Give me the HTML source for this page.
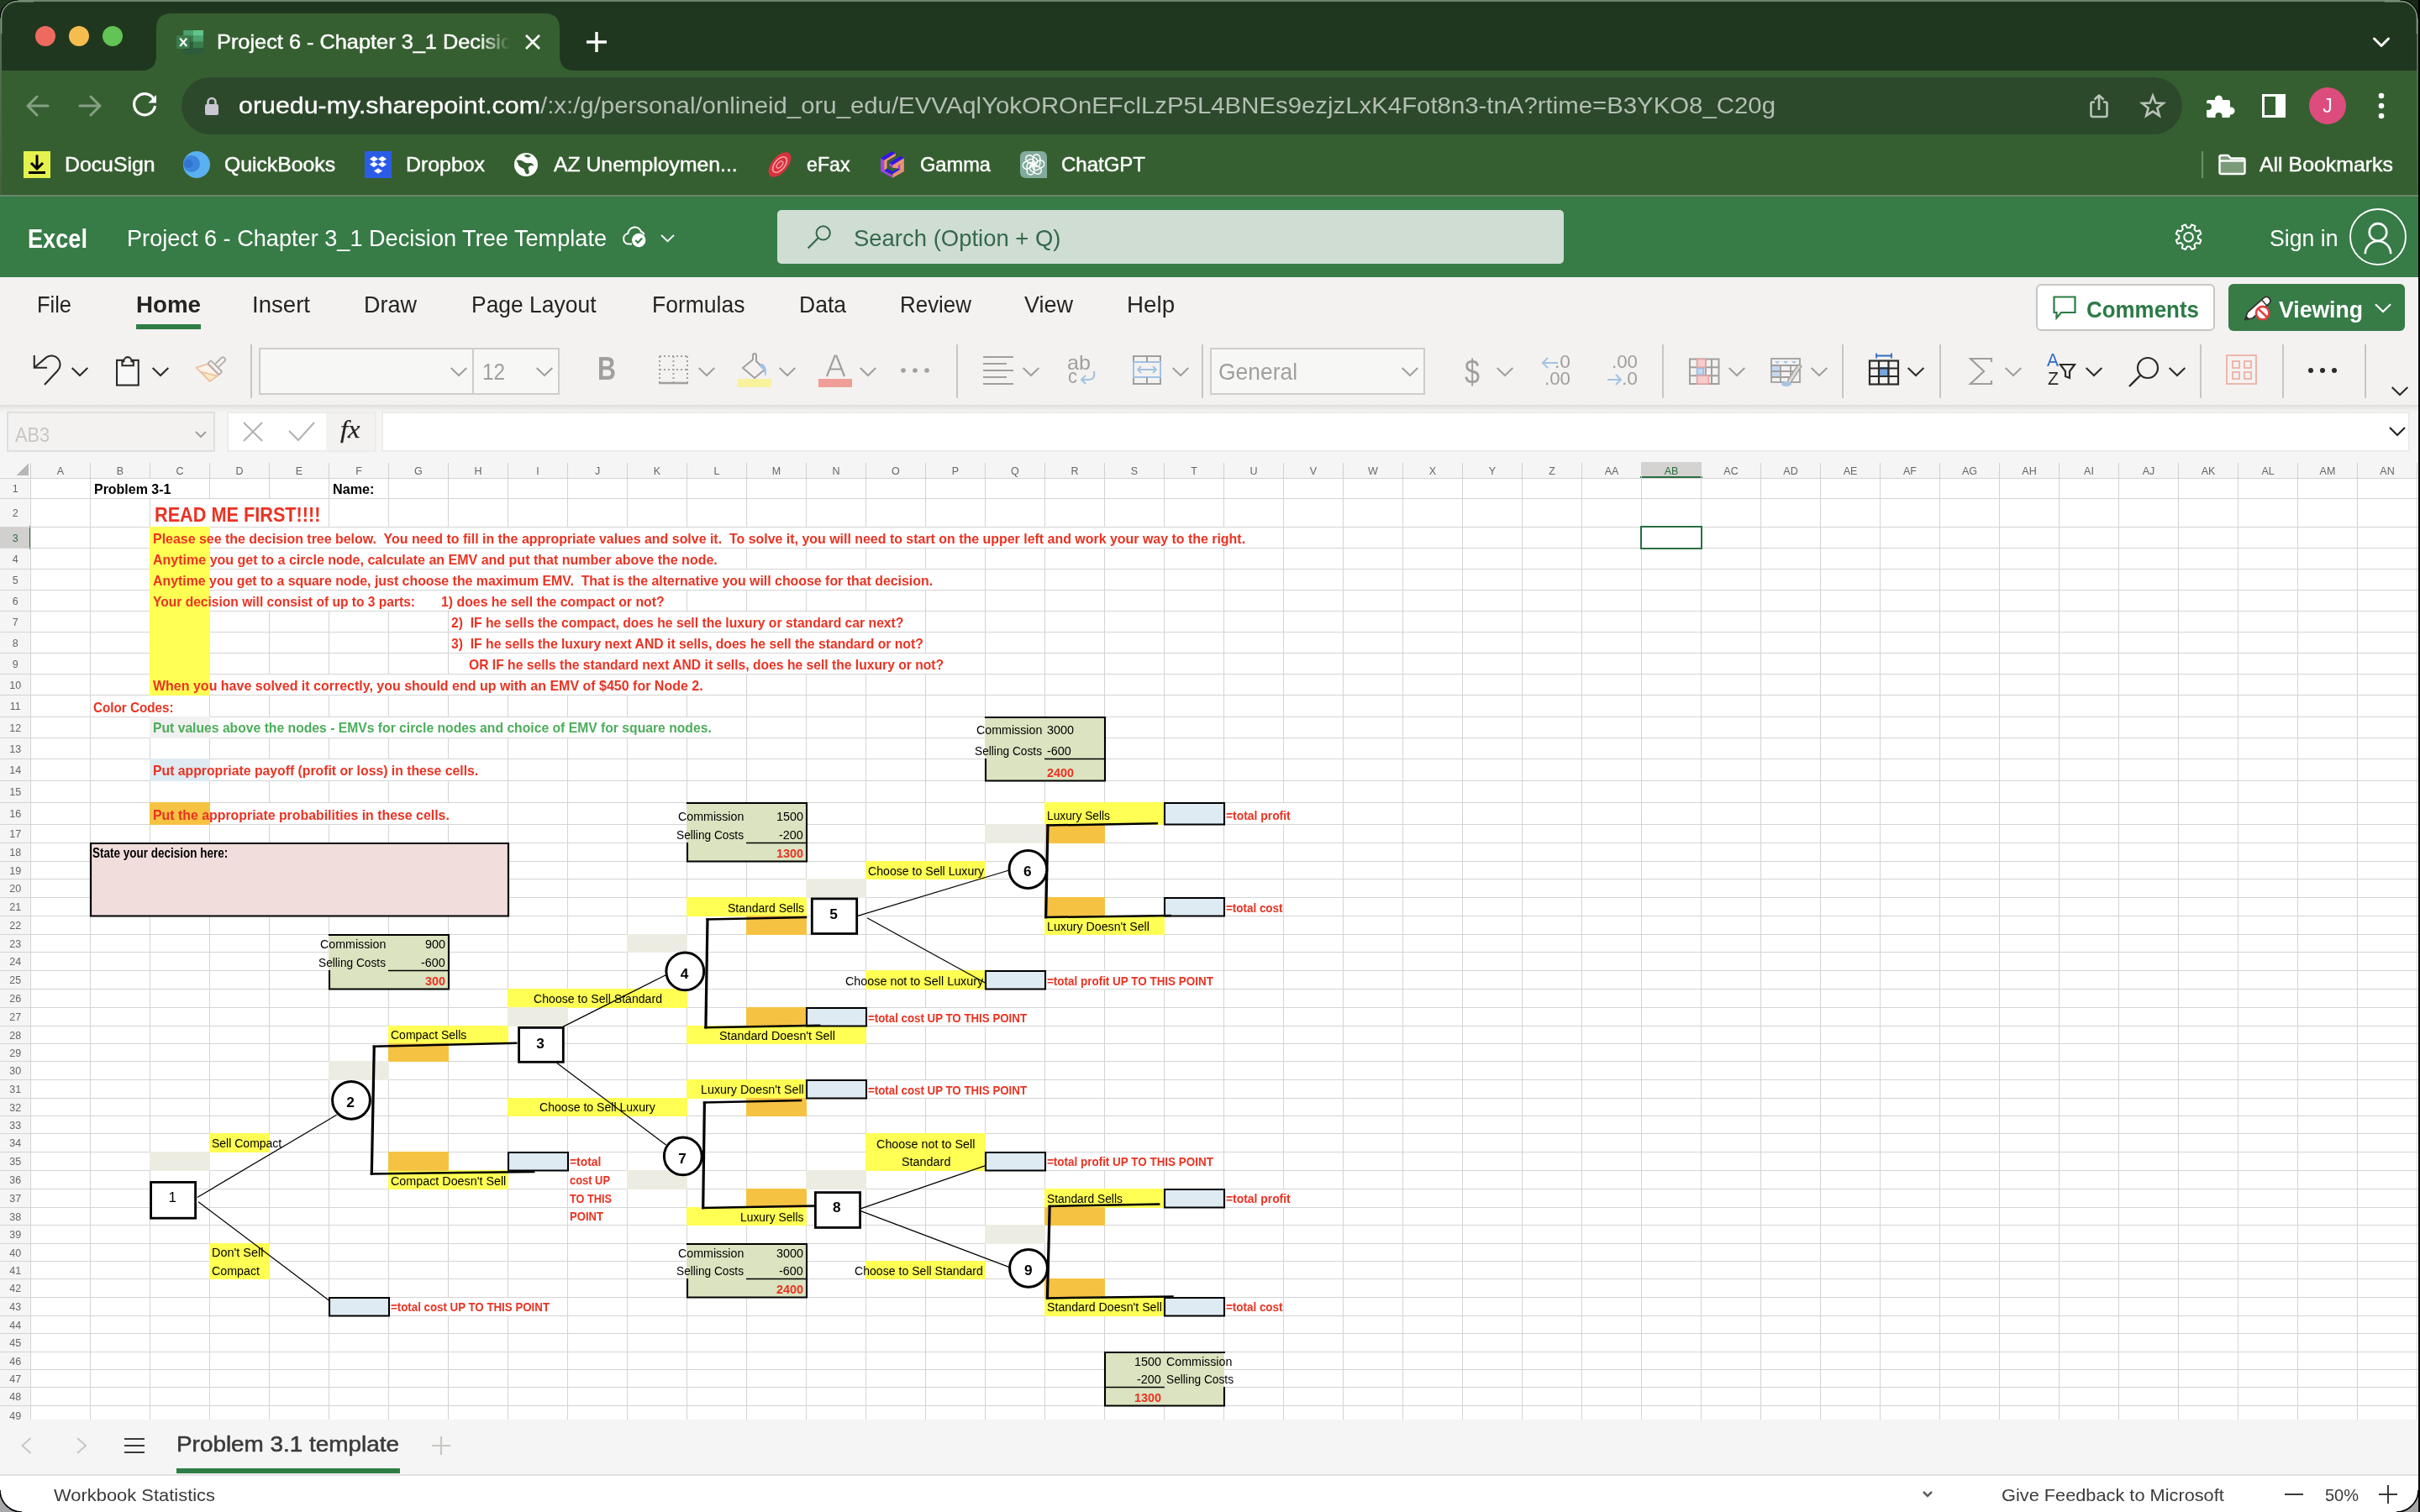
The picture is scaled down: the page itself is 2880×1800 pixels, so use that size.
<!DOCTYPE html>
<html><head><meta charset="utf-8"><title>Project 6 - Chapter 3_1 Decision Tree Template</title>
<style>
html,body{margin:0;padding:0;background:#000;}
body{width:2880px;height:1800px;overflow:hidden;font-family:"Liberation Sans",sans-serif;}
#win{position:absolute;left:0;top:0;width:2878px;height:1800px;overflow:hidden;background:#fff;will-change:transform;}
.t{position:absolute;white-space:pre;transform-origin:0 50%;}
.r{position:absolute;}
.a{position:absolute;left:0;top:0;}
</style></head>
<body>
<div id="win">
<div class="r" style="left:0px;top:0px;width:2880px;height:84px;background:#20371f;"></div>
<div class="r" style="left:0px;top:84px;width:2880px;height:150px;background:#365f31;"></div>
<div class="r" style="left:0px;top:232px;width:2880px;height:2px;background:#68886a;"></div>
<svg class="a" width="2880" height="240" viewBox="0 0 2880 240"><path d="M168 84 Q186 84 186 66 L186 34 Q186 16 204 16 L648 16 Q666 16 666 34 L666 66 Q666 84 684 84 Z" fill="#365f31"/><circle cx="54" cy="43" r="12" fill="#ee6a5f"/><circle cx="94" cy="43" r="12" fill="#f5bd4f"/><circle cx="134" cy="43" r="12" fill="#61c454"/><g transform="translate(210,36)"><rect x="8.2" y="0" width="23.8" height="27.8" rx="1.6" fill="#2d5c3c"/><rect x="8.2" y="0" width="11.7" height="6.8" fill="#4ba06e"/><rect x="19.9" y="0" width="12.1" height="6.8" fill="#61c48a"/><rect x="8.2" y="6.8" width="11.7" height="7" fill="#3b8050"/><rect x="19.9" y="6.8" width="12.1" height="7" fill="#4da36e"/><rect x="8.2" y="13.8" width="11.7" height="7.2" fill="#2f5f3d"/><rect x="19.9" y="13.8" width="12.1" height="7.2" fill="#397d4c"/><rect x="8.6" y="7.2" width="8.4" height="15.6" fill="#1f3f27" opacity="0.55"/><rect x="0" y="6.3" width="16" height="15.6" rx="1" fill="#3a7d4c"/><path d="M4.2 9.6 L12.2 19 M12.2 9.6 L4.2 19" stroke="#fff" stroke-width="2.2"/></g><path d="M626 42 L642 58 M642 42 L626 58" stroke="#fff" stroke-width="2.6" fill="none"/><path d="M698 50 L722 50 M710 38 L710 62" stroke="#fff" stroke-width="3.4" fill="none"/><path d="M2825.5 46 L2834 54.5 L2842.5 46" stroke="#fff" stroke-width="3" fill="none" stroke-linecap="round" stroke-linejoin="round"/><path d="M57 126 L33 126 M44 115 L33 126 L44 137" stroke="#86a084" stroke-width="3" fill="none" stroke-linecap="round" stroke-linejoin="round"/><path d="M95 126 L119 126 M108 115 L119 126 L108 137" stroke="#86a084" stroke-width="3" fill="none" stroke-linecap="round" stroke-linejoin="round"/><path d="M183.5 119 A12.5 12.5 0 1 0 184.5 126" stroke="#fff" stroke-width="3.2" fill="none"/><path d="M186 113 L186 122.5 L176.5 122.5 Z" fill="#fff"/><rect x="216" y="92" width="2381" height="68" rx="34" fill="#2d492c"/><rect x="244" y="124" width="16" height="13" rx="2" fill="#c9c7d1"/><path d="M247.5 125 L247.5 121.5 A4.5 4.5 0 0 1 256.5 121.5 L256.5 125" stroke="#c9c7d1" stroke-width="2.6" fill="none"/><path d="M2493 121.500 L2490.500 121.500 Q2488.500 121.500 2488.500 123.500 L2488.500 137 Q2488.500 139 2490.500 139 L2505.500 139 Q2507.500 139 2507.500 137 L2507.500 123.500 Q2507.500 121.500 2505.500 121.500 L2503 121.500" stroke="#b9c3b8" stroke-width="2.6" fill="none"/><path d="M2498 131 L2498 114 M2492.500 118.500 L2498 113.500 L2503.500 118.500" stroke="#b9c3b8" stroke-width="2.6" fill="none" stroke-linejoin="round"/><polygon points="2562.0,113.8 2565.3,122.5 2574.6,122.9 2567.3,128.7 2569.8,137.7 2562.0,132.6 2554.2,137.7 2556.7,128.7 2549.4,122.9 2558.7,122.5" stroke="#b9c3b8" stroke-width="2.6" fill="none" stroke-linejoin="miter"/><path d="M2628 119 h8 a4.6 4.6 0 1 1 9 0 h7 q2 0 2 2 v6.5 a4.6 4.6 0 1 1 0 9 v1.5 q0 2 -2 2 h-7.5 v-2 a4 4 0 1 0 -8 0 v2 h-8.500 q-2 0 -2 -2 v-7 h2 a4 4 0 1 0 0 -8 h-2 v-2 q0 -2 2 -2 z" fill="#fff"/><rect x="2693.500" y="113.500" width="25" height="25" fill="none" stroke="#fff" stroke-width="3"/><rect x="2708" y="113" width="12" height="26" fill="#fff"/><circle cx="2770" cy="126" r="22" fill="#dc4c7c"/><circle cx="2834" cy="114" r="3.3" fill="#fff"/><circle cx="2834" cy="126" r="3.3" fill="#fff"/><circle cx="2834" cy="138" r="3.3" fill="#fff"/><rect x="28" y="180" width="32" height="32" fill="#e5f24d"/><path d="M44 184.500 L44 200 M37 194 L44 201 L51 194" stroke="#000" stroke-width="3" fill="none"/><rect x="34" y="204" width="20" height="3" fill="#000"/><circle cx="234" cy="196" r="16" fill="#5ab0f0"/><circle cx="228" cy="195" r="10" fill="#3b86dc"/><circle cx="224.500" cy="195" r="5" fill="#2f74cf"/><rect x="434" y="180" width="32" height="32" fill="#2b5ce8"/><g fill="#fff"><path d="M445 186 l5 3.200 -5 3.200 -5 -3.200z"/><path d="M455 186 l5 3.200 -5 3.200 -5 -3.200z"/><path d="M445 192.600 l5 3.200 -5 3.200 -5 -3.200z"/><path d="M455 192.600 l5 3.200 -5 3.200 -5 -3.200z"/><path d="M450 200.300 l5 3.200 -5 3.200 -5 -3.200z"/></g><circle cx="626" cy="196" r="14" fill="#fff"/><path d="M614.5 191 q5 -1.500 8.500 1.500 q3 2.500 7 1.500 q4 -0.500 5.500 3.500 q-3 -1 -5.500 0.500 q-2.500 2 -0.500 5 q1 3 -1.500 4.500 q-3 -0.500 -3.500 -4 q-0.500 -3 -4 -4 q-3.500 -1.500 -4 -5 z M624 184.500 q4.500 -1.500 8 1 q-2 2.500 -5 1.800 q-2.500 -0.300 -3 -2.800z" fill="#365f31"/><g transform="rotate(-50 928 196)"><ellipse cx="928" cy="196" rx="17.500" ry="9.500" fill="#d8323c"/><ellipse cx="928" cy="196" rx="11" ry="6" fill="none" stroke="#f2a0a6" stroke-width="1.600"/><ellipse cx="928" cy="196" rx="5" ry="2.600" fill="none" stroke="#f2a0a6" stroke-width="1.400"/></g><g transform="translate(1030 170) scale(0.09918)"><polygon points="183,185 225,210 225,335 325,392 325,422 183,340" fill="#a443f2"/><polygon points="325,392 462,312 462,342 325,422" fill="#ef9478"/><polygon points="183,185 320,100 360,125 225,210" fill="#3217ea"/><polygon points="225,210 360,125 360,158 258,218 258,308 225,335" fill="#ef9478"/><polygon points="225,335 258,308 325,348 392,308 415,320 325,375" fill="#3217ea"/><polygon points="325,375 415,320 415,262 462,235 462,312 325,392" fill="#ef9478"/><polygon points="285,243 420,160 462,185 325,268" fill="#3217ea"/><polygon points="285,243 325,268 325,300 285,275" fill="#a443f2"/><polygon points="325,268 462,185 462,235 415,262 392,275 392,308 325,300" fill="#ef9478"/><polygon points="392,275 415,262 415,320 392,308" fill="#a443f2"/></g><path d="M1221 180 h18 q7 0 7 7 v25 h-25 q-7 0 -7 -7 v-18 q0 -7 7 -7z" fill="#82ab9c"/><g fill="none" stroke="#fff" stroke-width="1.500" transform="translate(1230 196)"><rect x="-0.800" y="-12" width="8.600" height="14.600" rx="4.300" transform="rotate(0)"/><rect x="-0.800" y="-12" width="8.600" height="14.600" rx="4.300" transform="rotate(60)"/><rect x="-0.800" y="-12" width="8.600" height="14.600" rx="4.300" transform="rotate(120)"/><rect x="-0.800" y="-12" width="8.600" height="14.600" rx="4.300" transform="rotate(180)"/><rect x="-0.800" y="-12" width="8.600" height="14.600" rx="4.300" transform="rotate(240)"/><rect x="-0.800" y="-12" width="8.600" height="14.600" rx="4.300" transform="rotate(300)"/></g><rect x="2620" y="180" width="2" height="32" fill="#6f8f6d"/><path d="M2641.500 187 q0 -2 2 -2 h8 l3.500 3.500 h14.500 q2 0 2 2 v14.500 q0 2 -2 2 h-26 q-2 0 -2 -2 z" fill="#7b9a79" stroke="#fff" stroke-width="2.400"/><path d="M2641.500 191.500 h30" stroke="#fff" stroke-width="2.400"/></svg>
<div class="t" style="left:258.0px;top:37.7px;font-size:24px;line-height:24px;color:#fff;transform:scaleX(1.0555);-webkit-text-stroke:0.45px #fff;">Project 6 - Chapter 3_1 Decisio</div>
<div class="r" style="left:570px;top:30px;width:44px;height:40px;background:linear-gradient(90deg,rgba(54,95,49,0),#365f31 85%)"></div>
<div class="t" style="left:284.0px;top:112.3px;font-size:28px;line-height:28px;color:#fff;transform:scaleX(1.0847);-webkit-text-stroke:0.3px #fff;">oruedu-my.sharepoint.com</div>
<div class="t" style="left:643.0px;top:112.3px;font-size:28px;line-height:28px;color:#b4bfb3;transform:scaleX(1.0488);">/:x:/g/personal/onlineid_oru_edu/EVVAqlYokOROnEFclLzP5L4BNEs9ezjzLxK4Fot8n3-tnA?rtime=B3YKO8_C20g</div>
<div class="t" style="left:2764.2px;top:115.0px;font-size:23px;line-height:23px;color:#fff;">J</div>
<div class="t" style="left:77.0px;top:184.2px;font-size:24px;line-height:24px;color:#fff;transform:scaleX(1.0330);-webkit-text-stroke:0.45px #fff;">DocuSign</div>
<div class="t" style="left:267.0px;top:184.2px;font-size:24px;line-height:24px;color:#fff;transform:scaleX(1.0308);-webkit-text-stroke:0.45px #fff;">QuickBooks</div>
<div class="t" style="left:482.6px;top:184.2px;font-size:24px;line-height:24px;color:#fff;transform:scaleX(1.0362);-webkit-text-stroke:0.45px #fff;">Dropbox</div>
<div class="t" style="left:659.0px;top:184.2px;font-size:24px;line-height:24px;color:#fff;transform:scaleX(1.0312);-webkit-text-stroke:0.45px #fff;">AZ Unemploymen...</div>
<div class="t" style="left:960.0px;top:184.2px;font-size:24px;line-height:24px;color:#fff;transform:scaleX(0.9671);-webkit-text-stroke:0.45px #fff;">eFax</div>
<div class="t" style="left:1095.0px;top:184.2px;font-size:24px;line-height:24px;color:#fff;transform:scaleX(0.9842);-webkit-text-stroke:0.45px #fff;">Gamma</div>
<div class="t" style="left:1263.0px;top:184.2px;font-size:24px;line-height:24px;color:#fff;-webkit-text-stroke:0.45px #fff;">ChatGPT</div>
<div class="t" style="left:2689.0px;top:184.2px;font-size:24px;line-height:24px;color:#fff;transform:scaleX(1.0367);-webkit-text-stroke:0.45px #fff;">All Bookmarks</div>
<div class="r" style="left:0px;top:234px;width:2880px;height:96px;background:#377b47;"></div>
<div class="t" style="left:33.0px;top:268.3px;font-size:32px;line-height:32px;color:#fff;font-weight:bold;transform:scaleX(0.8490);">Excel</div>
<div class="t" style="left:151.0px;top:269.7px;font-size:28px;line-height:28px;color:#fff;transform:scaleX(0.9689);">Project 6 - Chapter 3_1 Decision Tree Template</div>
<div class="r" style="left:925px;top:250px;width:936px;height:64px;background:#cfddd3;border-radius:5px;"></div>
<div class="t" style="left:1015.5px;top:269.7px;font-size:28px;line-height:28px;color:#35694a;transform:scaleX(0.9808);">Search (Option + Q)</div>
<div class="t" style="left:2700.7px;top:269.7px;font-size:28px;line-height:28px;color:#fff;transform:scaleX(0.9519);">Sign in</div>
<svg class="a" style="top:233px" width="2880" height="97" viewBox="0 233 2880 97"><path d="M752 290.5 h-3.500 a6.300 6.300 0 0 1 -1.200 -12.500 a8.200 8.200 0 0 1 15.800 -2.200 a6 6 0 0 1 3.500 3.500" fill="none" stroke="#fff" stroke-width="2.100"/><circle cx="760.2" cy="286" r="8.200" fill="#fff"/><path d="M756.2 286 l2.900 2.900 l5.100 -5.400" stroke="#377b47" stroke-width="2.200" fill="none"/><path d="M787.0 279.9 L794.5 287.1 L802.0 279.9" stroke="#fff" stroke-width="2" fill="none"/><circle cx="979.7" cy="277.4" r="8.1" fill="none" stroke="#35694a" stroke-width="2"/><path d="M973.8 283.3 L961.6 295.6" stroke="#35694a" stroke-width="2.2"/><polygon points="2615.9,283.9 2619.4,285.9 2617.7,290.1 2613.8,289.0 2611.4,291.4 2612.5,295.3 2608.3,297.0 2606.3,293.5 2602.9,293.5 2600.9,297.0 2596.7,295.3 2597.8,291.4 2595.4,289.0 2591.5,290.1 2589.8,285.9 2593.3,283.9 2593.3,280.5 2589.8,278.5 2591.5,274.3 2595.4,275.4 2597.8,273.0 2596.7,269.1 2600.9,267.4 2602.9,270.9 2606.3,270.9 2608.3,267.4 2612.5,269.1 2611.4,273.0 2613.8,275.4 2617.7,274.3 2619.4,278.5 2615.9,280.5" fill="none" stroke="#fff" stroke-width="2" stroke-linejoin="round"/><circle cx="2604.6" cy="282.2" r="5.300" fill="none" stroke="#fff" stroke-width="2"/><circle cx="2830" cy="282" r="33" fill="none" stroke="#fff" stroke-width="1.900"/><circle cx="2830" cy="276.4" r="10.300" fill="none" stroke="#fff" stroke-width="2.600"/><path d="M2814.8 302.200 a15.200 15.200 0 0 1 30.400 0" fill="none" stroke="#fff" stroke-width="2.600"/></svg>
<div class="r" style="left:0px;top:330px;width:2880px;height:152px;background:#f3f2f1;"></div>
<div class="r" style="left:0;top:482px;width:2880px;height:9px;background:linear-gradient(180deg,#dcdcdb,#efefee 60%,#f4f4f4)"></div>
<div class="t" style="left:44.0px;top:349.0px;font-size:28px;line-height:28px;color:#252423;transform:scaleX(0.9087);">File</div>
<div class="t" style="left:162.0px;top:349.0px;font-size:28px;line-height:28px;color:#252423;font-weight:bold;transform:scaleX(0.9898);">Home</div>
<div class="t" style="left:300.0px;top:349.0px;font-size:28px;line-height:28px;color:#252423;transform:scaleX(0.9853);">Insert</div>
<div class="t" style="left:433.0px;top:349.0px;font-size:28px;line-height:28px;color:#252423;transform:scaleX(0.9642);">Draw</div>
<div class="t" style="left:560.5px;top:349.0px;font-size:28px;line-height:28px;color:#252423;transform:scaleX(0.9444);">Page Layout</div>
<div class="t" style="left:775.5px;top:349.0px;font-size:28px;line-height:28px;color:#252423;transform:scaleX(0.9469);">Formulas</div>
<div class="t" style="left:951.0px;top:349.0px;font-size:28px;line-height:28px;color:#252423;transform:scaleX(0.9468);">Data</div>
<div class="t" style="left:1071.0px;top:349.0px;font-size:28px;line-height:28px;color:#252423;transform:scaleX(0.9259);">Review</div>
<div class="t" style="left:1219.0px;top:349.0px;font-size:28px;line-height:28px;color:#252423;transform:scaleX(0.9637);">View</div>
<div class="t" style="left:1340.5px;top:349.0px;font-size:28px;line-height:28px;color:#252423;transform:scaleX(0.9916);">Help</div>
<div class="r" style="left:162px;top:386px;width:77px;height:6px;background:#2f7d46;"></div>
<div class="r" style="left:2423px;top:338px;width:213px;height:56px;background:#fff;border:2px solid #c8c6c4;border-radius:6px;box-sizing:border-box;"></div>
<div class="t" style="left:2483.0px;top:354.6px;font-size:28px;line-height:28px;color:#2c7a45;font-weight:bold;transform:scaleX(0.9261);">Comments</div>
<div class="r" style="left:2652px;top:338px;width:210px;height:56px;background:#377b47;border-radius:6px;"></div>
<div class="t" style="left:2712.0px;top:354.6px;font-size:28px;line-height:28px;color:#fff;font-weight:bold;transform:scaleX(0.9498);">Viewing</div>
<svg class="a" style="top:330px" width="2880" height="152" viewBox="0 330 2880 152"><path d="M2444.5 353.5 h25 v18.500 h-16.500 l-5.500 6.500 v-6.500 h-3 z" fill="none" stroke="#2c7a45" stroke-width="2.200"/><path d="M2827.0 362.2 L2836 371.0 L2845.0 362.2" stroke="#fff" stroke-width="2.2" fill="none"/><g transform="translate(2671.8 380.6) rotate(-41.5)"><path d="M0 0 L8 -4.6 L33.500 -4.600 Q38.500 -4.600 38.500 0 Q38.500 4.600 33.500 4.600 L8 4.600 Z" fill="#fff" stroke="#33322f" stroke-width="1.700" stroke-linejoin="round"/><path d="M0 0 L4.500 -2.600 L4.500 2.600 Z" fill="#33322f"/><path d="M30.500 -4.600 V4.600" stroke="#33322f" stroke-width="1.500"/></g><circle cx="2692.7" cy="372.6" r="7.700" fill="#fff" stroke="#e0403f" stroke-width="2.600"/><path d="M2687.3 367.4 l10.800 10.400" stroke="#e0403f" stroke-width="2.600"/><path d="M40.8 423 V437.8 H56 M41.3 437.3 L55.2 425.4 A10.4 10.4 0 0 1 68.6 441.2 L53 458" fill="none" stroke="#2b2a29" stroke-width="2.1"/><path d="M85.7 438.1 L95 447.1 L104.3 438.1" stroke="#2b2a29" stroke-width="2.1" fill="none"/><rect x="139.05" y="428.85" width="25.7" height="29.7" fill="#f8f8f8" stroke="#2b2a29" stroke-width="2.1"/><path d="M145.4 435.3 V430.3 H147.3 A4.65 5.2 0 0 1 156.6 430.3 H158.8 V435.3 Z" fill="#f3f2f1" stroke="#2b2a29" stroke-width="2.1"/><path d="M181.7 438.1 L191 447.1 L200.3 438.1" stroke="#2b2a29" stroke-width="2.1" fill="none"/><path d="M233.5 437.6 L247 433.4 L260.2 446.3 L249.7 453.8 Z" fill="#fdf3ec" stroke="#ecbfa0" stroke-width="1.8" stroke-linejoin="round"/><path d="M239.5 442.8 L258.6 447.6 L249.7 453.8 Z" fill="#f9ebc6" stroke="#ecbfa0" stroke-width="1.6" stroke-linejoin="round"/><g transform="rotate(45 255.8 437.6)"><rect x="253" y="421.6" width="5.6" height="14" rx="2.4" fill="#f3f2f1" stroke="#b1afad" stroke-width="1.8"/><rect x="246.3" y="435.1" width="19" height="5" rx="1.5" fill="#f3f2f1" stroke="#b1afad" stroke-width="1.8"/></g><rect x="298" y="410" width="2" height="64" fill="#c8c6c4"/><rect x="1138" y="410" width="2" height="64" fill="#c8c6c4"/><rect x="1430" y="410" width="2" height="64" fill="#c8c6c4"/><rect x="1978" y="410" width="2" height="64" fill="#c8c6c4"/><rect x="2192" y="410" width="2" height="64" fill="#c8c6c4"/><rect x="2308" y="410" width="2" height="64" fill="#c8c6c4"/><rect x="2618" y="410" width="2" height="64" fill="#c8c6c4"/><rect x="2716" y="410" width="2" height="64" fill="#c8c6c4"/><rect x="2814" y="410" width="2" height="64" fill="#c8c6c4"/><rect x="309" y="415" width="356" height="54" fill="#f7f7f6" stroke="#cfcdcb" stroke-width="2"/><path d="M563 415 v54" stroke="#cfcdcb" stroke-width="2"/><path d="M536.7 438.1 L546 447.1 L555.3 438.1" stroke="#a19f9d" stroke-width="2.1" fill="none"/><path d="M638.7 438.1 L648 447.1 L657.3 438.1" stroke="#a19f9d" stroke-width="2.1" fill="none"/><g stroke="#a19f9d" stroke-width="2" fill="none" stroke-dasharray="2 3"><path d="M785 424 h33 M785 424 v32 M818 424 v32 M801.500 424 v32 M785 440 h33"/></g><path d="M784 456 h35" stroke="#a19f9d" stroke-width="2.400"/><path d="M831.7 438.1 L841 447.1 L850.3 438.1" stroke="#a19f9d" stroke-width="2.1" fill="none"/><path d="M884 438 l12 -10 v-5 a2 2 0 0 1 4 0 v7 l10 10 -12 10 z" fill="none" stroke="#a19f9d" stroke-width="2"/><path d="M906 433 q7 2 5 14 q-1 -8 -6 -10z" fill="#a3c2e4" stroke="#a3c2e4" stroke-width="1"/><rect x="878" y="451" width="40" height="10" fill="#f8f29d"/><path d="M927.7 438.1 L937 447.1 L946.3 438.1" stroke="#a19f9d" stroke-width="2.1" fill="none"/><rect x="974" y="451" width="40" height="10" fill="#ef9f98"/><path d="M984 448 L993.6 423.5 h1.8 L1005 448 M987.6 439.5 H1001.4" stroke="#a19f9d" stroke-width="2.2" fill="none"/><path d="M1023.7 438.1 L1033 447.1 L1042.3 438.1" stroke="#a19f9d" stroke-width="2.1" fill="none"/><circle cx="1075" cy="441" r="2.800" fill="#a19f9d"/><circle cx="1089" cy="441" r="2.800" fill="#a19f9d"/><circle cx="1103" cy="441" r="2.800" fill="#a19f9d"/><rect x="1170" y="424" width="36" height="2" fill="#a19f9d"/><rect x="1170" y="432" width="28" height="2" fill="#a19f9d"/><rect x="1170" y="440" width="36" height="2" fill="#a19f9d"/><rect x="1170" y="448" width="28" height="2" fill="#a19f9d"/><rect x="1170" y="456" width="36" height="2" fill="#a19f9d"/><path d="M1217.7 438.1 L1227 447.1 L1236.3 438.1" stroke="#a19f9d" stroke-width="2.1" fill="none"/><path d="M1302 442 q2 10 -7 10 h-8 M1292 447 l-5 5 5 5" fill="none" stroke="#a3c2e4" stroke-width="2"/><rect x="1349" y="424" width="32" height="33" fill="none" stroke="#a19f9d" stroke-width="2"/><rect x="1349" y="431" width="32" height="18" fill="#f3f2f1" stroke="#a3c2e4" stroke-width="2"/><path d="M1365 424 v7 M1365 449 v8" stroke="#a19f9d" stroke-width="2"/><path d="M1354 440 h22 M1358 436 l-4 4 4 4 M1372 436 l4 4 -4 4" stroke="#a3c2e4" stroke-width="1.800" fill="none"/><path d="M1395.7 438.1 L1405 447.1 L1414.3 438.1" stroke="#a19f9d" stroke-width="2.1" fill="none"/><rect x="1441" y="415" width="254" height="54" fill="#f7f7f6" stroke="#cfcdcb" stroke-width="2"/><path d="M1668.7 438.1 L1678 447.1 L1687.3 438.1" stroke="#a19f9d" stroke-width="2.1" fill="none"/><path d="M1781.7 438.1 L1791 447.1 L1800.3 438.1" stroke="#a19f9d" stroke-width="2.1" fill="none"/><path d="M1836 432 h18 M1842 426 l-6 6 6 6" stroke="#a3c2e4" stroke-width="2" fill="none"/><path d="M1913 452 h16 M1923 446 l6 6 -6 6" stroke="#a3c2e4" stroke-width="2" fill="none"/><g stroke="#a19f9d" stroke-width="2" fill="none"><rect x="2011" y="427.5" width="34.5" height="29.5"/><path d="M2019.8 427.5 v29.5 M2029.8 427.5 v29.5 M2037 427.5 v29.5 M2011 437.2 h34.5 M2011 447.3 h34.5"/></g><rect x="2019.8" y="427.5" width="10" height="9.7" fill="#f6cccc" stroke="#e9a3a3" stroke-width="1.6"/><rect x="2019.8" y="438.6" width="7.4" height="7.4" fill="#c3d9f0" stroke="#9dbde4" stroke-width="1.6"/><rect x="2019.8" y="447.3" width="13.6" height="9.7" fill="#f6cccc" stroke="#e9a3a3" stroke-width="1.6"/><path d="M2057.7 438.1 L2067 447.1 L2076.3 438.1" stroke="#a19f9d" stroke-width="2.1" fill="none"/><g stroke="#a19f9d" stroke-width="1.800" fill="none"><rect x="2108" y="427" width="34" height="28"/><path d="M2108 435 h34 M2108 442 h26 M2108 449 h22 M2119 435 v20 M2131 435 v14"/></g><path d="M2112 430 l3 3 3-3z M2122 430 l3 3 3 -3z M2132 430 l3 3 3 -3z" fill="#a3c2e4"/><rect x="2109" y="436" width="9" height="5" fill="#c5d9f0"/><rect x="2109" y="443" width="9" height="5" fill="#c5d9f0"/><path d="M2144 436 l-12 18 q-2 5 -8 5 q4 -3 4 -7 l12 -18 z" fill="#dcdad8" stroke="#a9a7a5" stroke-width="1.600"/><ellipse cx="2126" cy="457" rx="6" ry="3" fill="#aac4e4"/><path d="M2155.7 438.1 L2165 447.1 L2174.3 438.1" stroke="#a19f9d" stroke-width="2.1" fill="none"/><rect x="2236" y="438" width="11" height="10" fill="#74a7e0" stroke="#2f6fc0" stroke-width="1.600"/><g stroke="#2b2a29" stroke-width="2.200" fill="none"><rect x="2225" y="429.500" width="34" height="28"/><path d="M2236 429.500 v28 M2247.500 429.500 v28 M2225 438.500 h34 M2225 448 h34"/></g><path d="M2233 423.500 h18 M2233 420.500 v6 M2251 420.500 v6" stroke="#2f6fc0" stroke-width="1.800" fill="none"/><path d="M2270.7 438.1 L2280 447.1 L2289.3 438.1" stroke="#2b2a29" stroke-width="2.1" fill="none"/><path d="M2370 431 v-4 h-25 l16 15 -16 15 h25 v-4" fill="none" stroke="#a19f9d" stroke-width="2.200"/><path d="M2386.7 438.1 L2396 447.1 L2405.3 438.1" stroke="#a19f9d" stroke-width="2.1" fill="none"/><path d="M2452 434 h17 l-6 8 v8 l-5 -2 v-6 z" fill="none" stroke="#2b2a29" stroke-width="2.200"/><path d="M2482.7 438.1 L2492 447.1 L2501.3 438.1" stroke="#2b2a29" stroke-width="2.1" fill="none"/><circle cx="2556" cy="438" r="12" fill="none" stroke="#2b2a29" stroke-width="2.200"/><path d="M2547 447 L2534 460" stroke="#2b2a29" stroke-width="2.400"/><path d="M2581.7 438.1 L2591 447.1 L2600.3 438.1" stroke="#2b2a29" stroke-width="2.1" fill="none"/><g stroke="#eeb1a4" stroke-width="1.800" fill="none"><rect x="2650" y="423" width="35" height="34"/><rect x="2657" y="430" width="8" height="8"/><rect x="2671" y="430" width="8" height="8"/><rect x="2657" y="443" width="8" height="8"/><rect x="2671" y="443" width="8" height="8"/></g><circle cx="2750" cy="441" r="3" fill="#2b2a29"/><circle cx="2764" cy="441" r="3" fill="#2b2a29"/><circle cx="2778" cy="441" r="3" fill="#2b2a29"/><path d="M2846.7 461.1 L2856 470.1 L2865.3 461.1" stroke="#2b2a29" stroke-width="2.1" fill="none"/></svg>
<div class="t" style="left:574.0px;top:429.6px;font-size:27px;line-height:27px;color:#a19f9d;transform:scaleX(0.8990);">12</div>
<div class="t" style="left:711.0px;top:419.0px;font-size:39px;line-height:39px;color:#a19f9d;font-weight:bold;transform:scaleX(0.7811);">B</div>
<div class="t" style="left:1270.0px;top:419.7px;font-size:24px;line-height:24px;color:#a19f9d;transform:scaleX(1.0489);">ab</div>
<div class="t" style="left:1271.0px;top:435.7px;font-size:24px;line-height:24px;color:#a19f9d;transform:scaleX(0.9167);">c</div>
<div class="t" style="left:1450.0px;top:429.3px;font-size:28px;line-height:28px;color:#a19f9d;transform:scaleX(0.9436);">General</div>
<div class="t" style="left:1743.0px;top:423.1px;font-size:40px;line-height:40px;color:#a19f9d;transform:scaleX(0.8091);">$</div>
<div class="t" style="left:1850.0px;top:420.0px;font-size:22px;line-height:22px;color:#a19f9d;transform:scaleX(1.0356);">.0</div>
<div class="t" style="left:1838.0px;top:440.2px;font-size:22px;line-height:22px;color:#a19f9d;transform:scaleX(1.0136);">.00</div>
<div class="t" style="left:1918.0px;top:420.0px;font-size:22px;line-height:22px;color:#a19f9d;transform:scaleX(1.0136);">.00</div>
<div class="t" style="left:1930.0px;top:440.2px;font-size:22px;line-height:22px;color:#a19f9d;transform:scaleX(1.0356);">.0</div>
<div class="t" style="left:2436.0px;top:418.4px;font-size:22px;line-height:22px;color:#2f6fc0;transform:scaleX(0.9541);">A</div>
<div class="t" style="left:2437.0px;top:440.4px;font-size:22px;line-height:22px;color:#2b2a29;transform:scaleX(0.9674);">Z</div>
<div class="r" style="left:0px;top:491px;width:2880px;height:59px;background:#f5f5f5;"></div>
<div class="r" style="left:8px;top:490px;width:248px;height:48px;background:#f3f2f1;border:2px solid #e1dfdd;box-sizing:border-box;"></div>
<div class="t" style="left:18.0px;top:506.5px;font-size:23px;line-height:23px;color:#c8c6c4;transform:scaleX(0.9431);">AB3</div>
<div class="r" style="left:270px;top:490px;width:178px;height:48px;background:#fff;border:2px solid #edebe9;box-sizing:border-box;"></div>
<div class="r" style="left:388px;top:492px;width:58px;height:44px;background:#f3f2f1;"></div>
<div class="r" style="left:454px;top:490px;width:2414px;height:48px;background:#fff;border:2px solid #edebe9;box-sizing:border-box;"></div>
<svg class="a" style="top:482px" width="2880" height="68" viewBox="0 482 2880 68"><path d="M233 514 l6 6 6 -6" stroke="#a19f9d" stroke-width="2" fill="none"/><path d="M290 503 l22 22 M312 503 l-22 22" stroke="#b3b0ad" stroke-width="2" fill="none"/><path d="M344 513 l11 11 19 -21" stroke="#b3b0ad" stroke-width="2" fill="none"/><path d="M2844 509 l9 9 9 -9" stroke="#252423" stroke-width="2.200" fill="none"/></svg>
<div class="t" style="left:405.0px;top:497.2px;font-size:29.5px;line-height:29.5px;color:#252423;font-style:italic;font-family:'Liberation Serif',serif;transform:scaleX(1.1038);-webkit-text-stroke:0.25px #252423;">fx</div>
<div class="r" style="left:0px;top:550px;width:2880px;height:1140px;background:#fff;"></div>
<div class="r" style="left:0px;top:546px;width:2880px;height:24px;background:#f5f5f5;"></div>
<div class="r" style="left:0px;top:569px;width:36px;height:1121px;background:#f5f5f5;"></div>
<div class="r" style="left:1953px;top:550px;width:72px;height:17px;background:#d5d3d1;"></div>
<div class="r" style="left:1952px;top:567px;width:74px;height:2.4px;background:#2a6e40;"></div>
<div class="r" style="left:0px;top:628px;width:35px;height:24px;background:#d2d0ce;"></div>
<div class="r" style="left:34.6px;top:626px;width:2.4px;height:28px;background:#2a6e40;"></div>
<svg class="a" style="top:546px" width="2880" height="1144" viewBox="0 546 2880 1144" shape-rendering="crispEdges"><path d="M0 569.5 H2880 M0 593.5 H2880 M0 627.5 H2880 M0 652.5 H2880 M0 677.5 H2880 M0 702.5 H2880 M0 727.5 H2880 M0 752.5 H2880 M0 777.5 H2880 M0 802.5 H2880 M0 827.5 H2880 M0 853.5 H2880 M0 878.5 H2880 M0 903.5 H2880 M0 929.5 H2880 M0 955.5 H2880 M0 981.5 H2880 M0 1003.5 H2880 M0 1025.5 H2880 M0 1046.5 H2880 M0 1068.5 H2880 M0 1090.5 H2880 M0 1112.5 H2880 M0 1133.5 H2880 M0 1155.5 H2880 M0 1177.5 H2880 M0 1199.5 H2880 M0 1221.5 H2880 M0 1242.5 H2880 M0 1263.5 H2880 M0 1285.5 H2880 M0 1307.5 H2880 M0 1328.5 H2880 M0 1349.5 H2880 M0 1371.5 H2880 M0 1393.5 H2880 M0 1415.5 H2880 M0 1437.5 H2880 M0 1458.5 H2880 M0 1480.5 H2880 M0 1501.5 H2880 M0 1522.5 H2880 M0 1544.5 H2880 M0 1566.5 H2880 M0 1587.5 H2880 M0 1609.5 H2880 M0 1630.5 H2880 M0 1651.5 H2880 M0 1673.5 H2880" stroke="#d4d4d4" stroke-width="1" fill="none"/><path d="M36.5 569 V1690 M107.5 569 V1690 M178.5 569 V1690 M249.5 569 V1690 M320.5 569 V1690 M391.5 569 V1690 M462.5 569 V1690 M533.5 569 V1690 M604.5 569 V1690 M675.5 569 V1690 M746.5 569 V1690 M817.5 569 V1690 M888.5 569 V1690 M959.5 569 V1690 M1030.5 569 V1690 M1101.5 569 V1690 M1172.5 569 V1690 M1243.5 569 V1690 M1314.5 569 V1690 M1385.5 569 V1690 M1456.5 569 V1690 M1527.5 569 V1690 M1598.5 569 V1690 M1669.5 569 V1690 M1740.5 569 V1690 M1811.5 569 V1690 M1882.5 569 V1690 M1953.5 569 V1690 M2024.5 569 V1690 M2095.5 569 V1690 M2166.5 569 V1690 M2237.5 569 V1690 M2308.5 569 V1690 M2379.5 569 V1690 M2450.5 569 V1690 M2521.5 569 V1690 M2592.5 569 V1690 M2663.5 569 V1690 M2734.5 569 V1690 M2805.5 569 V1690 M2876.5 569 V1690" stroke="#d4d4d4" stroke-width="1" fill="none"/><rect x="178" y="570" width="1" height="23" fill="#fff"/><rect x="249" y="594" width="72" height="33" fill="#fff"/><rect x="249" y="628" width="1208" height="24" fill="#fff"/><rect x="249" y="653" width="569" height="24" fill="#fff"/><rect x="249" y="678" width="853" height="24" fill="#fff"/><rect x="249" y="703" width="498" height="24" fill="#fff"/><rect x="604" y="728" width="427" height="24" fill="#fff"/><rect x="604" y="753" width="427" height="24" fill="#fff"/><rect x="604" y="778" width="498" height="24" fill="#fff"/><rect x="249" y="803" width="569" height="24" fill="#fff"/><rect x="178" y="828" width="1" height="25" fill="#fff"/><rect x="249" y="854" width="569" height="24" fill="#fff"/><rect x="249" y="904" width="285" height="25" fill="#fff"/><rect x="249" y="956" width="285" height="25" fill="#fff"/><rect x="320" y="1350" width="1" height="21" fill="#fff"/><rect x="533" y="1545" width="72" height="21" fill="#fff"/><rect x="1101" y="1200" width="72" height="21" fill="#fff"/><rect x="1101" y="1286" width="72" height="21" fill="#fff"/><rect x="1314" y="1156" width="72" height="21" fill="#fff"/><rect x="1314" y="1372" width="72" height="21" fill="#fff"/><rect x="1527" y="956" width="1" height="25" fill="#fff"/><rect x="1527" y="1416" width="1" height="21" fill="#fff"/><path d="M36.5 551 V569 M107.5 551 V569 M178.5 551 V569 M249.5 551 V569 M320.5 551 V569 M391.5 551 V569 M462.5 551 V569 M533.5 551 V569 M604.5 551 V569 M675.5 551 V569 M746.5 551 V569 M817.5 551 V569 M888.5 551 V569 M959.5 551 V569 M1030.5 551 V569 M1101.5 551 V569 M1172.5 551 V569 M1243.5 551 V569 M1314.5 551 V569 M1385.5 551 V569 M1456.5 551 V569 M1527.5 551 V569 M1598.5 551 V569 M1669.5 551 V569 M1740.5 551 V569 M1811.5 551 V569 M1882.5 551 V569 M1953.5 551 V569 M2024.5 551 V569 M2095.5 551 V569 M2166.5 551 V569 M2237.5 551 V569 M2308.5 551 V569 M2379.5 551 V569 M2450.5 551 V569 M2521.5 551 V569 M2592.5 551 V569 M2663.5 551 V569 M2734.5 551 V569 M2805.5 551 V569 M2876.5 551 V569" stroke="#d0d0d0" stroke-width="1" fill="none"/><path d="M34 552 V566 H19.5 Z" fill="#b7b7b7"/></svg>
<div class="t" style="left:67.8px;top:555.0px;font-size:12.5px;line-height:12.5px;color:#666;">A</div>
<div class="t" style="left:138.8px;top:555.0px;font-size:12.5px;line-height:12.5px;color:#666;">B</div>
<div class="t" style="left:209.5px;top:555.0px;font-size:12.5px;line-height:12.5px;color:#666;">C</div>
<div class="t" style="left:280.5px;top:555.0px;font-size:12.5px;line-height:12.5px;color:#666;">D</div>
<div class="t" style="left:351.8px;top:555.0px;font-size:12.5px;line-height:12.5px;color:#666;">E</div>
<div class="t" style="left:423.2px;top:555.0px;font-size:12.5px;line-height:12.5px;color:#666;">F</div>
<div class="t" style="left:493.1px;top:555.0px;font-size:12.5px;line-height:12.5px;color:#666;">G</div>
<div class="t" style="left:564.5px;top:555.0px;font-size:12.5px;line-height:12.5px;color:#666;">H</div>
<div class="t" style="left:638.3px;top:555.0px;font-size:12.5px;line-height:12.5px;color:#666;">I</div>
<div class="t" style="left:707.9px;top:555.0px;font-size:12.5px;line-height:12.5px;color:#666;">J</div>
<div class="t" style="left:777.8px;top:555.0px;font-size:12.5px;line-height:12.5px;color:#666;">K</div>
<div class="t" style="left:849.5px;top:555.0px;font-size:12.5px;line-height:12.5px;color:#666;">L</div>
<div class="t" style="left:918.8px;top:555.0px;font-size:12.5px;line-height:12.5px;color:#666;">M</div>
<div class="t" style="left:990.5px;top:555.0px;font-size:12.5px;line-height:12.5px;color:#666;">N</div>
<div class="t" style="left:1061.1px;top:555.0px;font-size:12.5px;line-height:12.5px;color:#666;">O</div>
<div class="t" style="left:1132.8px;top:555.0px;font-size:12.5px;line-height:12.5px;color:#666;">P</div>
<div class="t" style="left:1203.1px;top:555.0px;font-size:12.5px;line-height:12.5px;color:#666;">Q</div>
<div class="t" style="left:1274.5px;top:555.0px;font-size:12.5px;line-height:12.5px;color:#666;">R</div>
<div class="t" style="left:1345.8px;top:555.0px;font-size:12.5px;line-height:12.5px;color:#666;">S</div>
<div class="t" style="left:1417.2px;top:555.0px;font-size:12.5px;line-height:12.5px;color:#666;">T</div>
<div class="t" style="left:1487.5px;top:555.0px;font-size:12.5px;line-height:12.5px;color:#666;">U</div>
<div class="t" style="left:1558.8px;top:555.0px;font-size:12.5px;line-height:12.5px;color:#666;">V</div>
<div class="t" style="left:1628.1px;top:555.0px;font-size:12.5px;line-height:12.5px;color:#666;">W</div>
<div class="t" style="left:1700.8px;top:555.0px;font-size:12.5px;line-height:12.5px;color:#666;">X</div>
<div class="t" style="left:1771.8px;top:555.0px;font-size:12.5px;line-height:12.5px;color:#666;">Y</div>
<div class="t" style="left:1843.2px;top:555.0px;font-size:12.5px;line-height:12.5px;color:#666;">Z</div>
<div class="t" style="left:1909.7px;top:555.0px;font-size:12.5px;line-height:12.5px;color:#666;">AA</div>
<div class="t" style="left:1980.7px;top:555.0px;font-size:12.5px;line-height:12.5px;color:#2a6e40;">AB</div>
<div class="t" style="left:2051.3px;top:555.0px;font-size:12.5px;line-height:12.5px;color:#666;">AC</div>
<div class="t" style="left:2122.3px;top:555.0px;font-size:12.5px;line-height:12.5px;color:#666;">AD</div>
<div class="t" style="left:2193.7px;top:555.0px;font-size:12.5px;line-height:12.5px;color:#666;">AE</div>
<div class="t" style="left:2265.0px;top:555.0px;font-size:12.5px;line-height:12.5px;color:#666;">AF</div>
<div class="t" style="left:2335.0px;top:555.0px;font-size:12.5px;line-height:12.5px;color:#666;">AG</div>
<div class="t" style="left:2406.3px;top:555.0px;font-size:12.5px;line-height:12.5px;color:#666;">AH</div>
<div class="t" style="left:2480.1px;top:555.0px;font-size:12.5px;line-height:12.5px;color:#666;">AI</div>
<div class="t" style="left:2549.7px;top:555.0px;font-size:12.5px;line-height:12.5px;color:#666;">AJ</div>
<div class="t" style="left:2619.7px;top:555.0px;font-size:12.5px;line-height:12.5px;color:#666;">AK</div>
<div class="t" style="left:2691.4px;top:555.0px;font-size:12.5px;line-height:12.5px;color:#666;">AL</div>
<div class="t" style="left:2760.6px;top:555.0px;font-size:12.5px;line-height:12.5px;color:#666;">AM</div>
<div class="t" style="left:2832.3px;top:555.0px;font-size:12.5px;line-height:12.5px;color:#666;">AN</div>
<div class="t" style="left:14.8px;top:576.3px;font-size:12.5px;line-height:12.5px;color:#666;">1</div>
<div class="t" style="left:14.8px;top:605.3px;font-size:12.5px;line-height:12.5px;color:#666;">2</div>
<div class="t" style="left:14.8px;top:634.8px;font-size:12.5px;line-height:12.5px;color:#2a6e40;">3</div>
<div class="t" style="left:14.8px;top:659.8px;font-size:12.5px;line-height:12.5px;color:#666;">4</div>
<div class="t" style="left:14.8px;top:684.8px;font-size:12.5px;line-height:12.5px;color:#666;">5</div>
<div class="t" style="left:14.8px;top:709.8px;font-size:12.5px;line-height:12.5px;color:#666;">6</div>
<div class="t" style="left:14.8px;top:734.8px;font-size:12.5px;line-height:12.5px;color:#666;">7</div>
<div class="t" style="left:14.8px;top:759.8px;font-size:12.5px;line-height:12.5px;color:#666;">8</div>
<div class="t" style="left:14.8px;top:784.8px;font-size:12.5px;line-height:12.5px;color:#666;">9</div>
<div class="t" style="left:11.3px;top:809.8px;font-size:12.5px;line-height:12.5px;color:#666;">10</div>
<div class="t" style="left:11.8px;top:835.3px;font-size:12.5px;line-height:12.5px;color:#666;">11</div>
<div class="t" style="left:11.3px;top:860.8px;font-size:12.5px;line-height:12.5px;color:#666;">12</div>
<div class="t" style="left:11.3px;top:885.8px;font-size:12.5px;line-height:12.5px;color:#666;">13</div>
<div class="t" style="left:11.3px;top:911.3px;font-size:12.5px;line-height:12.5px;color:#666;">14</div>
<div class="t" style="left:11.3px;top:937.3px;font-size:12.5px;line-height:12.5px;color:#666;">15</div>
<div class="t" style="left:11.3px;top:963.3px;font-size:12.5px;line-height:12.5px;color:#666;">16</div>
<div class="t" style="left:11.3px;top:987.3px;font-size:12.5px;line-height:12.5px;color:#666;">17</div>
<div class="t" style="left:11.3px;top:1009.3px;font-size:12.5px;line-height:12.5px;color:#666;">18</div>
<div class="t" style="left:11.3px;top:1030.8px;font-size:12.5px;line-height:12.5px;color:#666;">19</div>
<div class="t" style="left:11.3px;top:1052.3px;font-size:12.5px;line-height:12.5px;color:#666;">20</div>
<div class="t" style="left:11.3px;top:1074.3px;font-size:12.5px;line-height:12.5px;color:#666;">21</div>
<div class="t" style="left:11.3px;top:1096.3px;font-size:12.5px;line-height:12.5px;color:#666;">22</div>
<div class="t" style="left:11.3px;top:1117.8px;font-size:12.5px;line-height:12.5px;color:#666;">23</div>
<div class="t" style="left:11.3px;top:1139.3px;font-size:12.5px;line-height:12.5px;color:#666;">24</div>
<div class="t" style="left:11.3px;top:1161.3px;font-size:12.5px;line-height:12.5px;color:#666;">25</div>
<div class="t" style="left:11.3px;top:1183.3px;font-size:12.5px;line-height:12.5px;color:#666;">26</div>
<div class="t" style="left:11.3px;top:1205.3px;font-size:12.5px;line-height:12.5px;color:#666;">27</div>
<div class="t" style="left:11.3px;top:1226.8px;font-size:12.5px;line-height:12.5px;color:#666;">28</div>
<div class="t" style="left:11.3px;top:1247.8px;font-size:12.5px;line-height:12.5px;color:#666;">29</div>
<div class="t" style="left:11.3px;top:1269.3px;font-size:12.5px;line-height:12.5px;color:#666;">30</div>
<div class="t" style="left:11.3px;top:1291.3px;font-size:12.5px;line-height:12.5px;color:#666;">31</div>
<div class="t" style="left:11.3px;top:1312.8px;font-size:12.5px;line-height:12.5px;color:#666;">32</div>
<div class="t" style="left:11.3px;top:1333.8px;font-size:12.5px;line-height:12.5px;color:#666;">33</div>
<div class="t" style="left:11.3px;top:1355.3px;font-size:12.5px;line-height:12.5px;color:#666;">34</div>
<div class="t" style="left:11.3px;top:1377.3px;font-size:12.5px;line-height:12.5px;color:#666;">35</div>
<div class="t" style="left:11.3px;top:1399.3px;font-size:12.5px;line-height:12.5px;color:#666;">36</div>
<div class="t" style="left:11.3px;top:1421.3px;font-size:12.5px;line-height:12.5px;color:#666;">37</div>
<div class="t" style="left:11.3px;top:1442.8px;font-size:12.5px;line-height:12.5px;color:#666;">38</div>
<div class="t" style="left:11.3px;top:1464.3px;font-size:12.5px;line-height:12.5px;color:#666;">39</div>
<div class="t" style="left:11.3px;top:1485.8px;font-size:12.5px;line-height:12.5px;color:#666;">40</div>
<div class="t" style="left:11.3px;top:1506.8px;font-size:12.5px;line-height:12.5px;color:#666;">41</div>
<div class="t" style="left:11.3px;top:1528.3px;font-size:12.5px;line-height:12.5px;color:#666;">42</div>
<div class="t" style="left:11.3px;top:1550.3px;font-size:12.5px;line-height:12.5px;color:#666;">43</div>
<div class="t" style="left:11.3px;top:1571.8px;font-size:12.5px;line-height:12.5px;color:#666;">44</div>
<div class="t" style="left:11.3px;top:1593.3px;font-size:12.5px;line-height:12.5px;color:#666;">45</div>
<div class="t" style="left:11.3px;top:1614.8px;font-size:12.5px;line-height:12.5px;color:#666;">46</div>
<div class="t" style="left:11.3px;top:1635.8px;font-size:12.5px;line-height:12.5px;color:#666;">47</div>
<div class="t" style="left:11.3px;top:1657.3px;font-size:12.5px;line-height:12.5px;color:#666;">48</div>
<div class="t" style="left:11.3px;top:1679.6px;font-size:12.5px;line-height:12.5px;color:#666;">49</div>
<div class="r" style="left:178px;top:627px;width:72px;height:201px;background:#ffff54;"></div>
<div class="r" style="left:178px;top:853px;width:72px;height:26px;background:#f1f1f1;"></div>
<div class="r" style="left:178px;top:903px;width:72px;height:27px;background:#dfebf3;"></div>
<div class="r" style="left:178px;top:955px;width:72px;height:27px;background:#f5c242;"></div>
<div class="r" style="left:249px;top:1349px;width:72px;height:23px;background:#ffff54;"></div>
<div class="r" style="left:249px;top:1480px;width:72px;height:43px;background:#ffff54;"></div>
<div class="r" style="left:462px;top:1221px;width:143px;height:22px;background:#ffff54;"></div>
<div class="r" style="left:462px;top:1393px;width:143px;height:23px;background:#ffff54;"></div>
<div class="r" style="left:604px;top:1177px;width:214px;height:23px;background:#ffff54;"></div>
<div class="r" style="left:604px;top:1307px;width:214px;height:22px;background:#ffff54;"></div>
<div class="r" style="left:817px;top:1068px;width:143px;height:23px;background:#ffff54;"></div>
<div class="r" style="left:817px;top:1221px;width:214px;height:22px;background:#ffff54;"></div>
<div class="r" style="left:817px;top:1285px;width:143px;height:23px;background:#ffff54;"></div>
<div class="r" style="left:817px;top:1437px;width:143px;height:22px;background:#ffff54;"></div>
<div class="r" style="left:1030px;top:1025px;width:143px;height:22px;background:#ffff54;"></div>
<div class="r" style="left:1030px;top:1155px;width:143px;height:23px;background:#ffff54;"></div>
<div class="r" style="left:1030px;top:1349px;width:143px;height:45px;background:#ffff54;"></div>
<div class="r" style="left:1030px;top:1501px;width:143px;height:22px;background:#ffff54;"></div>
<div class="r" style="left:1243px;top:955px;width:143px;height:27px;background:#ffff54;"></div>
<div class="r" style="left:1243px;top:1090px;width:143px;height:23px;background:#ffff54;"></div>
<div class="r" style="left:1243px;top:1415px;width:143px;height:23px;background:#ffff54;"></div>
<div class="r" style="left:1243px;top:1544px;width:143px;height:23px;background:#ffff54;"></div>
<div class="r" style="left:462px;top:1242px;width:72px;height:22px;background:#f5c242;"></div>
<div class="r" style="left:462px;top:1371px;width:72px;height:23px;background:#f5c242;"></div>
<div class="r" style="left:888px;top:1090px;width:72px;height:23px;background:#f5c242;"></div>
<div class="r" style="left:888px;top:1199px;width:72px;height:23px;background:#f5c242;"></div>
<div class="r" style="left:888px;top:1307px;width:72px;height:22px;background:#f5c242;"></div>
<div class="r" style="left:888px;top:1415px;width:72px;height:23px;background:#f5c242;"></div>
<div class="r" style="left:1243px;top:981px;width:72px;height:23px;background:#f5c242;"></div>
<div class="r" style="left:1243px;top:1068px;width:72px;height:23px;background:#f5c242;"></div>
<div class="r" style="left:1243px;top:1437px;width:72px;height:22px;background:#f5c242;"></div>
<div class="r" style="left:1243px;top:1522px;width:72px;height:23px;background:#f5c242;"></div>
<div class="r" style="left:178px;top:1371px;width:72px;height:23px;background:#edece2;"></div>
<div class="r" style="left:391px;top:1263px;width:72px;height:23px;background:#edece2;"></div>
<div class="r" style="left:604px;top:1199px;width:72px;height:23px;background:#edece2;"></div>
<div class="r" style="left:746px;top:1112px;width:72px;height:22px;background:#edece2;"></div>
<div class="r" style="left:746px;top:1393px;width:72px;height:23px;background:#edece2;"></div>
<div class="r" style="left:959px;top:1046px;width:72px;height:23px;background:#edece2;"></div>
<div class="r" style="left:959px;top:1393px;width:72px;height:23px;background:#edece2;"></div>
<div class="r" style="left:1172px;top:981px;width:72px;height:23px;background:#edece2;"></div>
<div class="r" style="left:1172px;top:1458px;width:72px;height:23px;background:#edece2;"></div>
<div class="r" style="left:391px;top:1112px;width:143px;height:66px;background:#dbe3c0;"></div>
<div class="r" style="left:817px;top:955px;width:143px;height:71px;background:#dbe3c0;"></div>
<div class="r" style="left:1172px;top:853px;width:143px;height:77px;background:#dbe3c0;"></div>
<div class="r" style="left:817px;top:1480px;width:143px;height:65px;background:#dbe3c0;"></div>
<div class="r" style="left:1314px;top:1609px;width:143px;height:65px;background:#dbe3c0;"></div>
<div class="r" style="left:107px;top:1003px;width:498px;height:88px;background:#f0dddc;"></div>
<div class="r" style="left:391px;top:1544px;width:72px;height:23px;background:#dfebf3;"></div>
<div class="r" style="left:604px;top:1371px;width:72px;height:23px;background:#dfebf3;"></div>
<div class="r" style="left:959px;top:1199px;width:72px;height:23px;background:#dfebf3;"></div>
<div class="r" style="left:959px;top:1285px;width:72px;height:23px;background:#dfebf3;"></div>
<div class="r" style="left:1172px;top:1155px;width:72px;height:23px;background:#dfebf3;"></div>
<div class="r" style="left:1172px;top:1371px;width:72px;height:23px;background:#dfebf3;"></div>
<div class="r" style="left:1385px;top:955px;width:72px;height:27px;background:#dfebf3;"></div>
<div class="r" style="left:1385px;top:1068px;width:72px;height:23px;background:#dfebf3;"></div>
<div class="r" style="left:1385px;top:1415px;width:72px;height:23px;background:#dfebf3;"></div>
<div class="r" style="left:1385px;top:1544px;width:72px;height:23px;background:#dfebf3;"></div>
<svg class="a" style="top:546px" width="2880" height="1144" viewBox="0 546 2880 1144"><path d="M106.9 1004 H606.1 M106.9 1090.5 H606.1 M108 1002.9 V1091.6 M605 1002.9 V1091.6" stroke="#000" stroke-width="2.2" fill="none"/><path d="M390.95 1545 H464.05 M390.95 1566.5 H464.05 M392 1543.95 V1567.55 M463 1543.95 V1567.55" stroke="#000" stroke-width="2.1" fill="none"/><path d="M603.95 1372 H677.05 M603.95 1393.5 H677.05 M605 1370.95 V1394.55 M676 1370.95 V1394.55" stroke="#000" stroke-width="2.1" fill="none"/><path d="M958.95 1200 H1032.05 M958.95 1221.5 H1032.05 M960 1198.95 V1222.55 M1031 1198.95 V1222.55" stroke="#000" stroke-width="2.1" fill="none"/><path d="M958.95 1286 H1032.05 M958.95 1307.5 H1032.05 M960 1284.95 V1308.55 M1031 1284.95 V1308.55" stroke="#000" stroke-width="2.1" fill="none"/><path d="M1171.95 1156 H1245.05 M1171.95 1177.5 H1245.05 M1173 1154.95 V1178.55 M1244 1154.95 V1178.55" stroke="#000" stroke-width="2.1" fill="none"/><path d="M1171.95 1372 H1245.05 M1171.95 1393.5 H1245.05 M1173 1370.95 V1394.55 M1244 1370.95 V1394.55" stroke="#000" stroke-width="2.1" fill="none"/><path d="M1384.95 956 H1458.05 M1384.95 981.5 H1458.05 M1386 954.95 V982.55 M1457 954.95 V982.55" stroke="#000" stroke-width="2.1" fill="none"/><path d="M1384.95 1069 H1458.05 M1384.95 1090.5 H1458.05 M1386 1067.95 V1091.55 M1457 1067.95 V1091.55" stroke="#000" stroke-width="2.1" fill="none"/><path d="M1384.95 1416 H1458.05 M1384.95 1437.5 H1458.05 M1386 1414.95 V1438.55 M1457 1414.95 V1438.55" stroke="#000" stroke-width="2.1" fill="none"/><path d="M1384.95 1545 H1458.05 M1384.95 1566.5 H1458.05 M1386 1543.95 V1567.55 M1457 1543.95 V1567.55" stroke="#000" stroke-width="2.1" fill="none"/><path d="M390.95 1113 H535.05 M390.95 1177.5 H535.05 M392 1155 V1178.55 M534 1111.95 V1178.55" stroke="#000" stroke-width="2.1" fill="none"/><path d="M816.95 956 H961.05 M816.95 1025.5 H961.05 M818 1003 V1026.55 M960 954.95 V1026.55" stroke="#000" stroke-width="2.1" fill="none"/><path d="M1171.95 854 H1316.05 M1171.95 929.5 H1316.05 M1173 903 V930.55 M1315 852.95 V930.55" stroke="#000" stroke-width="2.1" fill="none"/><path d="M816.95 1481 H961.05 M816.95 1544.5 H961.05 M818 1522 V1545.55 M960 1479.95 V1545.55" stroke="#000" stroke-width="2.1" fill="none"/><path d="M1313.95 1610 H1458.05 M1313.95 1673.5 H1458.05 M1315 1608.95 V1674.55 M1457 1651 V1674.55" stroke="#000" stroke-width="2.1" fill="none"/><path d="M462 1155.5 H534" stroke="#000" stroke-width="1.3"/><path d="M888 1003.5 H960" stroke="#000" stroke-width="1.3"/><path d="M1243 903.5 H1315" stroke="#000" stroke-width="1.3"/><path d="M888 1522.5 H960" stroke="#000" stroke-width="1.3"/><path d="M1314 1651.5 H1386" stroke="#000" stroke-width="1.3"/><path d="M234.7 1425.5 L400.7 1327.3" stroke="#000" stroke-width="1.25" fill="none"/><path d="M236 1430.7 L392 1548.4" stroke="#000" stroke-width="1.25" fill="none"/><path d="M669.4 1222.6 L793.3 1160.3" stroke="#000" stroke-width="1.25" fill="none"/><path d="M662.8 1265.6 L792.6 1363" stroke="#000" stroke-width="1.25" fill="none"/><path d="M1020.7 1090.3 L1200.9 1036" stroke="#000" stroke-width="1.25" fill="none"/><path d="M1032 1092.8 L1172.8 1170.3" stroke="#000" stroke-width="1.25" fill="none"/><path d="M1024.3 1438.8 L1173.5 1387.3" stroke="#000" stroke-width="1.25" fill="none"/><path d="M1024.3 1441.6 L1202 1508.8" stroke="#000" stroke-width="1.25" fill="none"/><path d="M445.3 1244.6 L442.3 1398.6000000000001" stroke="#000" stroke-width="3.2" fill="none"/><path d="M443.7 1245.8 L615.5 1241.8" stroke="#000" stroke-width="2.5" fill="none"/><path d="M440.7 1397.4 L636.4 1395" stroke="#000" stroke-width="2.5" fill="none"/><path d="M842 1093.3999999999999 L839.9 1224.4" stroke="#000" stroke-width="3.2" fill="none"/><path d="M840.4 1094.6 L960.3 1092" stroke="#000" stroke-width="2.5" fill="none"/><path d="M838.3 1223.2 L976.3 1220.7" stroke="#000" stroke-width="2.5" fill="none"/><path d="M1247 981.4 L1244.6 1093.2" stroke="#000" stroke-width="3.2" fill="none"/><path d="M1245.4 982.6 L1378 980.2" stroke="#000" stroke-width="2.5" fill="none"/><path d="M1243.0 1092 L1393.9 1090" stroke="#000" stroke-width="2.5" fill="none"/><path d="M838.4 1311.3999999999999 L836.7 1439.2" stroke="#000" stroke-width="3.2" fill="none"/><path d="M836.8 1312.6 L954.3 1310" stroke="#000" stroke-width="2.5" fill="none"/><path d="M835.1 1438 L970.3 1435.6" stroke="#000" stroke-width="2.5" fill="none"/><path d="M1249.2 1434.8 L1246.4 1546.6000000000001" stroke="#000" stroke-width="3.2" fill="none"/><path d="M1247.6000000000001 1436 L1380.4 1433.5" stroke="#000" stroke-width="2.5" fill="none"/><path d="M1244.8000000000002 1545.4 L1396.7 1543.6" stroke="#000" stroke-width="2.5" fill="none"/><rect x="179.6" y="1407.4" width="53.000000000000014" height="42.79999999999991" fill="#fff" stroke="#000" stroke-width="2.8"/><rect x="617.6" y="1223.4" width="52.7" height="40.90000000000005" fill="#fff" stroke="#000" stroke-width="2.8"/><rect x="966.3" y="1069.9" width="53.40000000000005" height="41.600000000000094" fill="#fff" stroke="#000" stroke-width="2.8"/><rect x="970.4" y="1419.6000000000001" width="53.2" height="41.79999999999991" fill="#fff" stroke="#000" stroke-width="2.8"/><circle cx="418" cy="1309.8" r="22.4" fill="#fff" stroke="#000" stroke-width="3"/><circle cx="815.3" cy="1156.4" r="22.4" fill="#fff" stroke="#000" stroke-width="3"/><circle cx="1223.4" cy="1035" r="22.4" fill="#fff" stroke="#000" stroke-width="3"/><circle cx="812.8" cy="1376.4" r="22.4" fill="#fff" stroke="#000" stroke-width="3"/><circle cx="1224" cy="1509.8" r="22.4" fill="#fff" stroke="#000" stroke-width="3"/><rect x="1953" y="627" width="72" height="26" fill="none" stroke="#2a6e40" stroke-width="2"/></svg>
<div class="t" style="left:111.6px;top:573.7px;font-size:17.0px;line-height:17.0px;color:#000;font-weight:bold;transform:scaleX(0.9393);">Problem 3-1</div>
<div class="t" style="left:395.5px;top:573.7px;font-size:17.0px;line-height:17.0px;color:#000;font-weight:bold;transform:scaleX(0.9526);">Name:</div>
<div class="t" style="left:184.0px;top:600.5px;font-size:24.6px;line-height:24.6px;color:#ea3323;font-weight:bold;transform:scaleX(0.8813);">READ ME FIRST!!!!</div>
<div class="t" style="left:182.2px;top:633.2px;font-size:17.0px;line-height:17.0px;color:#ea3323;font-weight:bold;transform:scaleX(0.9373);">Please see the decision tree below.  You need to fill in the appropriate values and solve it.  To solve it, you will need to start on the upper left and work your way to the right.</div>
<div class="t" style="left:182.2px;top:657.9px;font-size:17.0px;line-height:17.0px;color:#ea3323;font-weight:bold;transform:scaleX(0.9420);">Anytime you get to a circle node, calculate an EMV and put that number above the node.</div>
<div class="t" style="left:182.2px;top:683.2px;font-size:17.0px;line-height:17.0px;color:#ea3323;font-weight:bold;transform:scaleX(0.9345);">Anytime you get to a square node, just choose the maximum EMV.  That is the alternative you will choose for that decision.</div>
<div class="t" style="left:182.2px;top:707.9px;font-size:17.0px;line-height:17.0px;color:#ea3323;font-weight:bold;transform:scaleX(0.9159);">Your decision will consist of up to 3 parts:</div>
<div class="t" style="left:524.8px;top:707.9px;font-size:17.0px;line-height:17.0px;color:#ea3323;font-weight:bold;transform:scaleX(0.9314);">1) does he sell the compact or not?</div>
<div class="t" style="left:537.2px;top:732.8px;font-size:17.0px;line-height:17.0px;color:#ea3323;font-weight:bold;transform:scaleX(0.9237);">2)  IF he sells the compact, does he sell the luxury or standard car next?</div>
<div class="t" style="left:537.2px;top:757.5px;font-size:17.0px;line-height:17.0px;color:#ea3323;font-weight:bold;transform:scaleX(0.9244);">3)  IF he sells the luxury next AND it sells, does he sell the standard or not?</div>
<div class="t" style="left:557.9px;top:782.8px;font-size:17.0px;line-height:17.0px;color:#ea3323;font-weight:bold;transform:scaleX(0.9213);">OR IF he sells the standard next AND it sells, does he sell the luxury or not?</div>
<div class="t" style="left:182.2px;top:807.5px;font-size:17.0px;line-height:17.0px;color:#ea3323;font-weight:bold;transform:scaleX(0.9407);">When you have solved it correctly, you should end up with an EMV of $450 for Node 2.</div>
<div class="t" style="left:110.7px;top:833.6px;font-size:17.0px;line-height:17.0px;color:#ea3323;font-weight:bold;transform:scaleX(0.8948);">Color Codes:</div>
<div class="t" style="left:182.2px;top:858.4px;font-size:17.0px;line-height:17.0px;color:#4cad5b;font-weight:bold;transform:scaleX(0.9235);">Put values above the nodes - EMVs for circle nodes and choice of EMV for square nodes.</div>
<div class="t" style="left:182.2px;top:909.2px;font-size:17.0px;line-height:17.0px;color:#ea3323;font-weight:bold;transform:scaleX(0.9274);">Put appropriate payoff (profit or loss) in these cells.</div>
<div class="t" style="left:182.2px;top:961.7px;font-size:17.0px;line-height:17.0px;color:#ea3323;font-weight:bold;transform:scaleX(0.9337);">Put the appropriate probabilities in these cells.</div>
<div class="t" style="left:109.8px;top:1008.0px;font-size:15.8px;line-height:15.8px;color:#000;font-weight:bold;transform:scaleX(0.8539);">State your decision here:</div>
<div class="t" style="left:252.0px;top:1354.4px;font-size:14.0px;line-height:14.0px;color:#000;">Sell Compact</div>
<div class="t" style="left:252.0px;top:1484.3px;font-size:14.0px;line-height:14.0px;color:#000;transform:scaleX(1.0323);">Don't Sell</div>
<div class="t" style="left:252.0px;top:1505.5px;font-size:14.0px;line-height:14.0px;color:#000;transform:scaleX(1.0175);">Compact</div>
<div class="t" style="left:465.0px;top:1225.3px;font-size:14.0px;line-height:14.0px;color:#000;">Compact Sells</div>
<div class="t" style="left:465.0px;top:1398.7px;font-size:14.0px;line-height:14.0px;color:#000;transform:scaleX(1.0233);">Compact Doesn't Sell</div>
<div class="t" style="left:635.0px;top:1182.3px;font-size:14.0px;line-height:14.0px;color:#000;transform:scaleX(1.0081);">Choose to Sell Standard</div>
<div class="t" style="left:642.3px;top:1311.3px;font-size:14.0px;line-height:14.0px;color:#000;transform:scaleX(1.0054);">Choose to Sell Luxury</div>
<div class="t" style="left:866.0px;top:1073.5px;font-size:14.0px;line-height:14.0px;color:#000;">Standard Sells</div>
<div class="t" style="left:855.5px;top:1225.6px;font-size:14.0px;line-height:14.0px;color:#000;transform:scaleX(1.0217);">Standard Doesn't Sell</div>
<div class="t" style="left:834.0px;top:1290.4px;font-size:14.0px;line-height:14.0px;color:#000;transform:scaleX(1.0218);">Luxury Doesn't Sell</div>
<div class="t" style="left:881.4px;top:1441.5px;font-size:14.0px;line-height:14.0px;color:#000;transform:scaleX(0.9888);">Luxury Sells</div>
<div class="t" style="left:1033.0px;top:1029.8px;font-size:14.0px;line-height:14.0px;color:#000;transform:scaleX(1.0076);">Choose to Sell Luxury</div>
<div class="t" style="left:1005.8px;top:1160.6px;font-size:14.0px;line-height:14.0px;color:#000;transform:scaleX(1.0242);">Choose not to Sell Luxury</div>
<div class="t" style="left:1043.0px;top:1354.5px;font-size:14.0px;line-height:14.0px;color:#000;transform:scaleX(1.0262);">Choose not to Sell</div>
<div class="t" style="left:1072.6px;top:1376.1px;font-size:14.0px;line-height:14.0px;color:#000;transform:scaleX(1.0278);">Standard</div>
<div class="t" style="left:1016.5px;top:1505.5px;font-size:14.0px;line-height:14.0px;color:#000;transform:scaleX(1.0068);">Choose to Sell Standard</div>
<div class="t" style="left:1246.4px;top:964.4px;font-size:14.0px;line-height:14.0px;color:#000;transform:scaleX(0.9835);">Luxury Sells</div>
<div class="t" style="left:1246.4px;top:1095.5px;font-size:14.0px;line-height:14.0px;color:#000;transform:scaleX(1.0143);">Luxury Doesn't Sell</div>
<div class="t" style="left:1246.4px;top:1420.2px;font-size:14.0px;line-height:14.0px;color:#000;transform:scaleX(0.9873);">Standard Sells</div>
<div class="t" style="left:1246.4px;top:1549.2px;font-size:14.0px;line-height:14.0px;color:#000;transform:scaleX(1.0135);">Standard Doesn't Sell</div>
<div class="t" style="left:678.3px;top:1375.8px;font-size:14.0px;line-height:14.0px;color:#ea3323;font-weight:bold;transform:scaleX(0.9913);">=total</div>
<div class="t" style="left:678.3px;top:1397.8px;font-size:14.0px;line-height:14.0px;color:#ea3323;font-weight:bold;transform:scaleX(0.9209);">cost UP</div>
<div class="t" style="left:678.3px;top:1419.8px;font-size:14.0px;line-height:14.0px;color:#ea3323;font-weight:bold;transform:scaleX(0.9096);">TO THIS</div>
<div class="t" style="left:678.3px;top:1441.3px;font-size:14.0px;line-height:14.0px;color:#ea3323;font-weight:bold;transform:scaleX(0.9350);">POINT</div>
<div class="t" style="left:465.0px;top:1549.4px;font-size:14.0px;line-height:14.0px;color:#ea3323;font-weight:bold;transform:scaleX(0.9497);">=total cost UP TO THIS POINT</div>
<div class="t" style="left:1033.0px;top:1204.8px;font-size:14.0px;line-height:14.0px;color:#ea3323;font-weight:bold;transform:scaleX(0.9497);">=total cost UP TO THIS POINT</div>
<div class="t" style="left:1033.0px;top:1290.8px;font-size:14.0px;line-height:14.0px;color:#ea3323;font-weight:bold;transform:scaleX(0.9497);">=total cost UP TO THIS POINT</div>
<div class="t" style="left:1246.4px;top:1160.6px;font-size:14.0px;line-height:14.0px;color:#ea3323;font-weight:bold;transform:scaleX(0.9607);">=total profit UP TO THIS POINT</div>
<div class="t" style="left:1246.4px;top:1376.1px;font-size:14.0px;line-height:14.0px;color:#ea3323;font-weight:bold;transform:scaleX(0.9607);">=total profit UP TO THIS POINT</div>
<div class="t" style="left:1459.3px;top:964.4px;font-size:14.0px;line-height:14.0px;color:#ea3323;font-weight:bold;transform:scaleX(0.9912);">=total profit</div>
<div class="t" style="left:1459.3px;top:1073.5px;font-size:14.0px;line-height:14.0px;color:#ea3323;font-weight:bold;transform:scaleX(0.9588);">=total cost</div>
<div class="t" style="left:1459.3px;top:1420.2px;font-size:14.0px;line-height:14.0px;color:#ea3323;font-weight:bold;transform:scaleX(0.9912);">=total profit</div>
<div class="t" style="left:1459.3px;top:1549.2px;font-size:14.0px;line-height:14.0px;color:#ea3323;font-weight:bold;transform:scaleX(0.9588);">=total cost</div>
<div class="t" style="left:200.6px;top:1416.6px;font-size:17px;line-height:17px;color:#000;">1</div>
<div class="t" style="left:412.2px;top:1303.6px;font-size:17.3px;line-height:17.3px;color:#000;font-weight:bold;">2</div>
<div class="t" style="left:638.2px;top:1233.6px;font-size:17.3px;line-height:17.3px;color:#000;font-weight:bold;">3</div>
<div class="t" style="left:809.8px;top:1150.6px;font-size:17.3px;line-height:17.3px;color:#000;font-weight:bold;">4</div>
<div class="t" style="left:987.2px;top:1079.9px;font-size:17.3px;line-height:17.3px;color:#000;font-weight:bold;">5</div>
<div class="t" style="left:1218.0px;top:1029.2px;font-size:17.3px;line-height:17.3px;color:#000;font-weight:bold;">6</div>
<div class="t" style="left:807.2px;top:1370.8px;font-size:17.3px;line-height:17.3px;color:#000;font-weight:bold;">7</div>
<div class="t" style="left:991.1px;top:1429.4px;font-size:17.3px;line-height:17.3px;color:#000;font-weight:bold;">8</div>
<div class="t" style="left:1219.0px;top:1504.0px;font-size:17.3px;line-height:17.3px;color:#000;font-weight:bold;">9</div>
<div class="t" style="left:380.9px;top:1116.9px;font-size:14.0px;line-height:14.0px;color:#000;transform:scaleX(1.0167);">Commission</div>
<div class="t" style="left:506.2px;top:1116.9px;font-size:14.0px;line-height:14.0px;color:#000;transform:scaleX(1.0275);">900</div>
<div class="t" style="left:379.2px;top:1138.9px;font-size:14.0px;line-height:14.0px;color:#000;transform:scaleX(0.9791);">Selling Costs</div>
<div class="t" style="left:501.4px;top:1138.9px;font-size:14.0px;line-height:14.0px;color:#000;transform:scaleX(1.0278);">-600</div>
<div class="t" style="left:506.2px;top:1160.9px;font-size:14.0px;line-height:14.0px;color:#ea3323;font-weight:bold;transform:scaleX(1.0275);">300</div>
<div class="t" style="left:806.9px;top:964.9px;font-size:14.0px;line-height:14.0px;color:#000;transform:scaleX(1.0167);">Commission</div>
<div class="t" style="left:924.2px;top:964.9px;font-size:14.0px;line-height:14.0px;color:#000;transform:scaleX(1.0275);">1500</div>
<div class="t" style="left:805.2px;top:986.9px;font-size:14.0px;line-height:14.0px;color:#000;transform:scaleX(0.9791);">Selling Costs</div>
<div class="t" style="left:927.4px;top:986.9px;font-size:14.0px;line-height:14.0px;color:#000;transform:scaleX(1.0278);">-200</div>
<div class="t" style="left:924.2px;top:1008.9px;font-size:14.0px;line-height:14.0px;color:#ea3323;font-weight:bold;transform:scaleX(1.0275);">1300</div>
<div class="t" style="left:1161.9px;top:861.9px;font-size:14.0px;line-height:14.0px;color:#000;transform:scaleX(1.0167);">Commission</div>
<div class="t" style="left:1246.3px;top:861.9px;font-size:14.0px;line-height:14.0px;color:#000;transform:scaleX(1.0275);">3000</div>
<div class="t" style="left:1160.2px;top:886.9px;font-size:14.0px;line-height:14.0px;color:#000;transform:scaleX(0.9791);">Selling Costs</div>
<div class="t" style="left:1246.3px;top:886.9px;font-size:14.0px;line-height:14.0px;color:#000;transform:scaleX(1.0278);">-600</div>
<div class="t" style="left:1246.3px;top:912.9px;font-size:14.0px;line-height:14.0px;color:#ea3323;font-weight:bold;transform:scaleX(1.0275);">2400</div>
<div class="t" style="left:806.9px;top:1484.9px;font-size:14.0px;line-height:14.0px;color:#000;transform:scaleX(1.0167);">Commission</div>
<div class="t" style="left:924.2px;top:1484.9px;font-size:14.0px;line-height:14.0px;color:#000;transform:scaleX(1.0275);">3000</div>
<div class="t" style="left:805.2px;top:1505.9px;font-size:14.0px;line-height:14.0px;color:#000;transform:scaleX(0.9791);">Selling Costs</div>
<div class="t" style="left:927.4px;top:1505.9px;font-size:14.0px;line-height:14.0px;color:#000;transform:scaleX(1.0278);">-600</div>
<div class="t" style="left:924.2px;top:1527.9px;font-size:14.0px;line-height:14.0px;color:#ea3323;font-weight:bold;transform:scaleX(1.0275);">2400</div>
<div class="t" style="left:1350.2px;top:1613.9px;font-size:14.0px;line-height:14.0px;color:#000;transform:scaleX(1.0275);">1500</div>
<div class="t" style="left:1388.3px;top:1613.9px;font-size:14.0px;line-height:14.0px;color:#000;transform:scaleX(1.0167);">Commission</div>
<div class="t" style="left:1353.4px;top:1634.9px;font-size:14.0px;line-height:14.0px;color:#000;transform:scaleX(1.0278);">-200</div>
<div class="t" style="left:1388.3px;top:1634.9px;font-size:14.0px;line-height:14.0px;color:#000;transform:scaleX(0.9791);">Selling Costs</div>
<div class="t" style="left:1350.2px;top:1656.9px;font-size:14.0px;line-height:14.0px;color:#ea3323;font-weight:bold;transform:scaleX(1.0275);">1300</div>
<div class="r" style="left:0px;top:1690px;width:2880px;height:66px;background:#f5f5f5;"></div>
<div class="r" style="left:0px;top:1755px;width:2880px;height:2px;background:#e1e1e1;"></div>
<div class="r" style="left:0px;top:1757px;width:2880px;height:43px;background:#fff;"></div>
<div class="t" style="left:210.0px;top:1705.6px;font-size:26.5px;line-height:26.5px;color:#3b3a39;transform:scaleX(1.0521);-webkit-text-stroke:0.55px #3b3a39;">Problem 3.1 template</div>
<div class="r" style="left:210px;top:1748px;width:266px;height:6px;background:#2f7d46;"></div>
<div class="t" style="left:64.0px;top:1768.8px;font-size:21px;line-height:21px;color:#3b3a39;transform:scaleX(1.0434);">Workbook Statistics</div>
<div class="t" style="left:2381.7px;top:1768.8px;font-size:21px;line-height:21px;color:#3b3a39;transform:scaleX(1.0360);">Give Feedback to Microsoft</div>
<div class="t" style="left:2767.0px;top:1768.8px;font-size:21px;line-height:21px;color:#3b3a39;transform:scaleX(0.9517);">50%</div>
<svg class="a" style="top:1689px" width="2880" height="111" viewBox="0 1689 2880 111"><path d="M36.500 1712 l-10 9 10 9" stroke="#c8c6c4" stroke-width="2" fill="none"/><path d="M92 1712 l10 9 -10 9" stroke="#c8c6c4" stroke-width="2" fill="none"/><path d="M148 1713 h24 M148 1721 h24 M148 1729 h24" stroke="#3b3a39" stroke-width="2" fill="none"/><path d="M514 1721 h22 M525 1710 v22" stroke="#c8c6c4" stroke-width="2.200" fill="none"/><path d="M2289 1776 l5 5 5 -5" stroke="#605e5c" stroke-width="2.600" fill="none"/><path d="M2719 1779 h22" stroke="#3b3a39" stroke-width="2" fill="none"/><path d="M2831 1779 h22 M2842 1768 v22" stroke="#3b3a39" stroke-width="2" fill="none"/></svg>
<div class="r" style="left:0;top:0;width:2878px;height:2px;background:#6f846e"></div><div class="r" style="left:0;top:0;width:2px;height:232px;background:linear-gradient(180deg,#5a7359,#46603f)"></div><div class="r" style="left:2876px;top:0;width:2px;height:232px;background:linear-gradient(180deg,#5a7359,#46603f)"></div><svg class="a" width="2880" height="1800" viewBox="0 0 2880 1800"><g transform="translate(0,0) scale(1,1)"><path d="M-2 -2 H25 V0 H21 A21 21 0 0 0 0 21 V25 H-2 Z" fill="#20371f"/><path d="M0 22 A22 22 0 0 1 22 0" stroke="#000" stroke-width="1.6" fill="none"/><path d="M1.6 40 V21 A19.4 19.4 0 0 1 21 1.6 H40" stroke="#7d937c" stroke-width="1.6" fill="none"/></g><g transform="translate(2878,0) scale(-1,1)"><path d="M-2 -2 H25 V0 H21 A21 21 0 0 0 0 21 V25 H-2 Z" fill="#172616"/><path d="M0 22 A22 22 0 0 1 22 0" stroke="#000" stroke-width="1.6" fill="none"/><path d="M1.6 40 V21 A19.4 19.4 0 0 1 21 1.6 H40" stroke="#7d937c" stroke-width="1.6" fill="none"/></g><g transform="translate(0,1800) scale(1,-1)"><path d="M-2 -2 H29 V0 H25 A25 25 0 0 0 0 25 V29 H-2 Z" fill="#a7a7aa"/><path d="M0 26 A26 26 0 0 1 26 0" stroke="#000" stroke-width="1.6" fill="none"/></g><g transform="translate(2878,1800) scale(-1,-1)"><path d="M-2 -2 H29 V0 H25 A25 25 0 0 0 0 25 V29 H-2 Z" fill="#a7a7aa"/><path d="M0 26 A26 26 0 0 1 26 0" stroke="#000" stroke-width="1.6" fill="none"/></g></svg>
</div>
</body></html>
